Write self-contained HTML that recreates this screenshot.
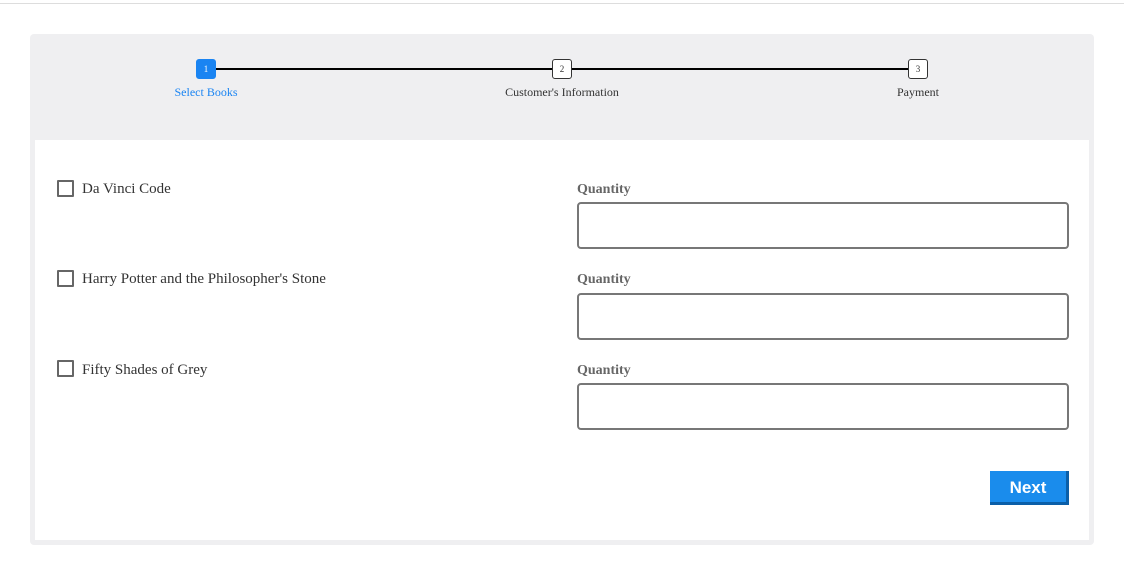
<!DOCTYPE html>
<html><head><style>
body{margin:0;width:1124px;height:573px;background:#fff;position:relative;font-family:"Liberation Serif",serif;overflow:hidden}
.top{position:absolute;left:0;top:3px;width:1124px;height:1px;background:#ddd}
.box{position:absolute;left:30px;top:34px;width:1064px;height:511px;background:#efeff1;border-radius:4px}
.inner{position:absolute;left:35px;top:140px;width:1054px;height:400px;background:#fff}
.line{position:absolute;left:206px;top:68px;width:712px;height:2px;background:#000}
.step{position:absolute;top:59px;width:18px;height:18px;border:1px solid #333;border-radius:3px;background:#fff;font-size:9px;text-align:center;line-height:18px;color:#333}
.step.a{background:#1a84f2;border-color:#1a84f2;color:#fff}
.lbl{position:absolute;top:85px;font-size:12px;color:#333;width:200px;text-align:center}
.cb{position:absolute;left:57px;width:13px;height:13px;border:2px solid #666;border-radius:1px}
.t{position:absolute;left:82px;font-size:15px;color:#333}
.q{position:absolute;left:577px;font-size:14px;font-weight:bold;color:#666}
.in{position:absolute;left:577px;width:488px;height:43px;border:2px solid #777;border-radius:4px}
.btn{position:absolute;left:990px;top:471px;width:76px;height:31px;background:#1a8cec;border-right:3px solid #0b5fa8;border-bottom:3px solid #0b5fa8;color:#fff;font-family:"Liberation Sans",sans-serif;font-weight:bold;font-size:17px;text-align:center;line-height:33px}
</style></head><body>
<div class="top"></div>
<div class="box"></div>
<div class="inner"></div>
<div class="line"></div>
<div class="step a" style="left:196px">1</div>
<div class="step" style="left:552px">2</div>
<div class="step" style="left:908px">3</div>
<div class="lbl" style="left:106px;color:#1a84f2">Select Books</div>
<div class="lbl" style="left:462px">Customer's Information</div>
<div class="lbl" style="left:818px">Payment</div>

<div class="cb" style="top:180px"></div><div class="t" style="top:181px">Da Vinci Code</div>
<div class="q" style="top:182px">Quantity</div><div class="in" style="top:202px"></div>

<div class="cb" style="top:270px"></div><div class="t" style="top:271px">Harry Potter and the Philosopher's Stone</div>
<div class="q" style="top:272px">Quantity</div><div class="in" style="top:293px"></div>

<div class="cb" style="top:360px"></div><div class="t" style="top:362px">Fifty Shades of Grey</div>
<div class="q" style="top:363px">Quantity</div><div class="in" style="top:383px"></div>

<div class="btn">Next</div>
</body></html>
